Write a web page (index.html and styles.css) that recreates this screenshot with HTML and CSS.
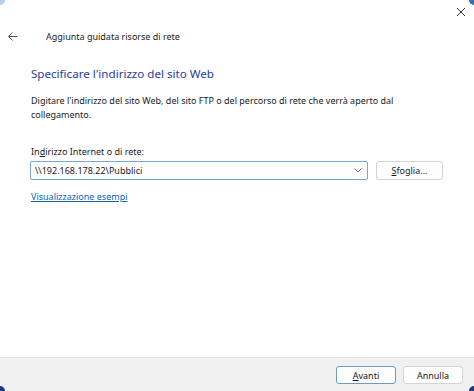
FILE: index.html
```html
<!DOCTYPE html>
<html lang="it">
<head>
  <meta charset="UTF-8">
  <title>Aggiunta guidata risorse di rete</title>
  <link rel="stylesheet" href="styles.css">
</head>
<body>
  <div class="window">
    <div class="titlebar">
      <span class="close">
        <svg width="10" height="10" viewBox="0 0 10 10"><path d="M1 1L9 9M9 1L1 9" stroke="#333" stroke-width="1"/></svg>
      </span>
    </div>
    <div class="nav">
      <span class="back">
        <svg width="10" height="9" viewBox="0 0 10 9"><path d="M0.5 4.5H9.5M4.5 0.5L0.5 4.5L4.5 8.5" fill="none" stroke="#555" stroke-width="1"/></svg>
      </span>
      <span class="nav-title">Aggiunta guidata risorse di rete</span>
    </div>

    <div class="content">
      <h1>Specificare l'indirizzo del sito Web</h1>
      <p class="intro">Digitare l'indirizzo del sito Web, del sito FTP o del percorso di rete che verrà aperto dal collegamento.</p>

      <div class="label">In<u>d</u>irizzo Internet o di rete:</div>
      <div class="field-row">
        <div class="combo">
          <span class="combo-text">\\192.168.178.22\Pubblici</span>
          <svg width="8" height="5" viewBox="0 0 8 5"><path d="M0.5 0.5L4 4L7.5 0.5" fill="none" stroke="#666" stroke-width="1"/></svg>
        </div>
        <button class="btn"><u>S</u>foglia...</button>
      </div>
      <a class="link" href="#">Visualizzazione esempi</a>
    </div>

    <div class="footer">
      <button class="btn btn-default"><u>A</u>vanti</button>
      <button class="btn">Annulla</button>
    </div>
  </div>
  <span class="corner tl"></span>
  <span class="corner tr"></span>
  <span class="corner bl"></span>
  <span class="corner br"></span>
</body>
</html>
```

FILE: styles.css
```css
html, body {
  margin: 0;
  padding: 0;
  height: 100%;
}
body {
  font-family: "Noto Sans", "Open Sans", sans-serif;
  font-size: 9px;
  color: #1a1a1a;
  background: #ffffff;
  position: relative;
  overflow: hidden;
}
.window {
  display: flex;
  flex-direction: column;
  height: 391px;
  background: #ffffff;
}
.titlebar {
  display: flex;
  justify-content: flex-end;
  height: 24px;
}
.close {
  display: flex;
  align-items: center;
  justify-content: center;
  width: 24px;
  height: 24px;
  margin-right: 1px;
}
.nav {
  display: flex;
  align-items: center;
  height: 24px;
}
.back {
  display: flex;
  width: 46px;
  padding-left: 8px;
  box-sizing: border-box;
}
.nav-title {
  font-size: 9px;
  color: #1a1a1a;
}
.content {
  flex: 1;
  padding: 16px 31px 0 31px;
}
h1 {
  margin: 0;
  font-size: 11.6px;
  font-weight: normal;
  color: #1f3d99;
  line-height: 20px;
}
.intro {
  margin: 10px 0 0 0;
  font-size: 9px;
  line-height: 14px;
  max-width: 372px;
}
.label {
  margin-top: 23px;
  font-size: 9px;
  line-height: 14px;
}
.label u, .btn u {
  text-decoration-thickness: 1px;
}
.field-row {
  display: flex;
  align-items: center;
  gap: 8px;
  margin-top: 2px;
  margin-left: -1px;
}
.combo {
  display: flex;
  align-items: center;
  justify-content: space-between;
  width: 338px;
  height: 19px;
  box-sizing: border-box;
  padding: 0 5px 0 4px;
  border: 1px solid #7aa6d0;
  border-radius: 2px;
  background: #fff;
}
.combo-text {
  font-size: 9px;
}
.btn {
  font-family: "Noto Sans", "Open Sans", sans-serif;
  font-size: 9px;
  color: #1a1a1a;
  width: 67px;
  height: 19px;
  padding: 0;
  background: #fdfdfd;
  border: 1px solid #d4d4d4;
  border-radius: 3px;
}
.link {
  display: inline-block;
  margin-top: 10px;
  font-size: 9px;
  color: #0a64b8;
  text-decoration: underline;
}
.footer {
  display: flex;
  justify-content: flex-end;
  gap: 7px;
  height: 34px;
  box-sizing: border-box;
  padding: 8px 11px 0 0;
  background: #f0f0f0;
  border-top: 1px solid #e2e2e2;
}
.footer .btn {
  width: 60px;
  height: 18px;
}
.btn-default {
  border-color: #6f9ac4;
}
.corner {
  position: absolute;
  width: 5px;
  height: 5px;
  background: #2f6fc4;
}
.corner.tl { top: 0; left: 0; border-bottom-right-radius: 5px; opacity: 0.35; }
.corner.tr { top: 0; right: 0; border-bottom-left-radius: 5px; }
.corner.bl { bottom: 0; left: 0; border-top-right-radius: 5px; background: #1b3a8a; }
.corner.br { bottom: 0; right: 0; border-top-left-radius: 5px; background: #1b3a8a; }
```
